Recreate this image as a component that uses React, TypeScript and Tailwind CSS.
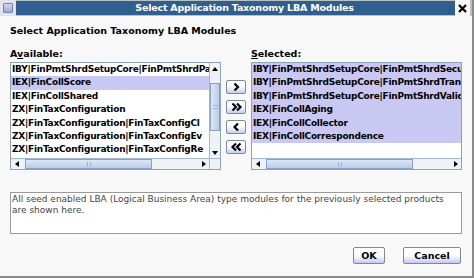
import React from 'react';

const available = [
  'IBY|FinPmtShrdSetupCore|FinPmtShrdPa',
  'IEX|FinCollScore',
  'IEX|FinCollShared',
  'ZX|FinTaxConfiguration',
  'ZX|FinTaxConfiguration|FinTaxConfigCl',
  'ZX|FinTaxConfiguration|FinTaxConfigEv',
  'ZX|FinTaxConfiguration|FinTaxConfigRe',
];

const selected = [
  'IBY|FinPmtShrdSetupCore|FinPmtShrdSecu',
  'IBY|FinPmtShrdSetupCore|FinPmtShrdTran',
  'IBY|FinPmtShrdSetupCore|FinPmtShrdValid',
  'IEX|FinCollAging',
  'IEX|FinCollCollector',
  'IEX|FinCollCorrespondence',
];

function Arrow({ dir }: { dir: 'up' | 'down' | 'left' | 'right' }) {
  const pts = {
    up: '1,6 4,2 7,6',
    down: '1,2 4,6 7,2',
    left: '6,1 2,4 6,7',
    right: '2,1 6,4 2,7',
  }[dir];
  return (
    <svg width="8" height="8" viewBox="0 0 8 8">
      <polygon points={pts} fill="#000" />
    </svg>
  );
}

function HScroll({ thumbLeft, thumbWidth }: { thumbLeft: number; thumbWidth: number }) {
  return (
    <div className="flex h-[11px] items-stretch border-t border-[#a3b8cc] bg-[#eef2f6]">
      <div className="flex w-[11px] items-center justify-center">
        <Arrow dir="left" />
      </div>
      <div className="relative flex-1">
        <div
          className="absolute top-0 bottom-0 flex items-center justify-center border border-[#8ca0bf] bg-gradient-to-b from-[#dde6f6] to-[#b9cde8]"
          style={{ left: thumbLeft, width: thumbWidth }}
        >
          <div className="h-[5px] w-[4px] border-x border-[#9fb2cf]" />
        </div>
      </div>
      <div className="flex w-[11px] items-center justify-center">
        <Arrow dir="right" />
      </div>
    </div>
  );
}

// chevron glyphs for the move buttons, count = 1 or 2
function Chevrons({ dir, count }: { dir: 'left' | 'right'; count: number }) {
  const one = dir === 'right' ? 'M1,1.5 L4.5,5 L1,8.5' : 'M4.5,1.5 L1,5 L4.5,8.5';
  return (
    <svg width={count === 1 ? 7 : 11} height="10" viewBox={count === 1 ? '0 0 6 10' : '0 0 10 10'}>
      <path d={one} fill="none" stroke="#000" strokeWidth="2.2" />
      {count === 2 && <path d={one} transform="translate(4.5,0)" fill="none" stroke="#000" strokeWidth="2.2" />}
    </svg>
  );
}

function MoveButton({ children }: { children: React.ReactNode }) {
  return (
    <button className="flex h-[14px] w-[20px] items-center justify-center rounded-[2px] border border-[#7a8a99] bg-gradient-to-b from-white from-40% to-[#c4d0f0]">
      {children}
    </button>
  );
}

const listText = 'whitespace-nowrap pl-[1px] text-[9px] font-bold tracking-[-0.25px] h-[13.4px] leading-[13.4px]';

export default function App() {
  return (
    <div
      className="flex h-[278px] w-[474px] flex-col overflow-hidden border-r-2 border-b-2 border-[#8a8a8a] bg-[#f8f8f8] text-black"
      style={{ fontFamily: '"DejaVu Sans", sans-serif' }}
    >
      <div className="flex h-[16px] items-center bg-[#b7c3c0] pr-[2px]">
        <div className="flex h-[16px] w-[16px] items-center justify-center bg-[#dfe3ec]">
          <div className="h-[10px] w-[10px] rounded-[1px] border border-[#8080a8] bg-gradient-to-b from-[#e8d0f0] to-[#8ea8d8]" />
        </div>
        <div className="flex h-[14px] flex-1 items-center justify-center bg-[#2f5e8f] pl-[18px] text-[9.5px] font-bold tracking-[-0.2px] text-white">
          Select Application Taxonomy LBA Modules
        </div>
        <div className="flex h-[16px] w-[15px] items-center justify-center bg-[#f8f8f8]">
          <svg width="9" height="9" viewBox="0 0 9 9">
            <path d="M1,1 L8,8 M8,1 L1,8" stroke="#000" strokeWidth="2.2" />
          </svg>
        </div>
      </div>

      <div className="flex flex-1 flex-col px-[10px] pt-[9px]">
        <div className="text-[9.5px] font-bold leading-[12px]">Select Application Taxonomy LBA Modules</div>

        <div className="mt-[11px] flex gap-[5px]">
          <div className="flex w-[211px] flex-col">
            <div className="mb-[2px] text-[9.5px] font-bold leading-[12px]">
              A<span className="underline">v</span>ailable:
            </div>
            <div className="flex h-[108px] flex-col border border-[#8da2b8] bg-white">
              <div className="flex flex-1">
                <div className="flex-1 overflow-hidden">
                  {available.map((t, i) => (
                    <div key={t} className={`${listText} ${i === 1 ? 'bg-[#c8c8f2]' : ''}`}>
                      {t}
                    </div>
                  ))}
                </div>
                <div className="flex w-[11px] flex-col border-l border-[#a3b8cc] bg-[#eef2f6]">
                  <div className="flex h-[11px] items-center justify-center">
                    <Arrow dir="up" />
                  </div>
                  <div className="flex flex-1 flex-col">
                    <div className="h-[9px]" />
                    <div className="flex h-[48px] items-center justify-center border border-[#8ca0bf] bg-gradient-to-r from-[#dde6f6] to-[#b9cde8]">
                      <div className="h-[4px] w-[5px] border-y border-[#9fb2cf]" />
                    </div>
                  </div>
                  <div className="flex h-[11px] items-center justify-center">
                    <Arrow dir="down" />
                  </div>
                </div>
              </div>
              <div className="flex">
                <div className="flex-1">
                  <HScroll thumbLeft={3} thumbWidth={127} />
                </div>
                <div className="w-[11px] border-t border-l border-[#a3b8cc] bg-[#eef2f6]" />
              </div>
            </div>
          </div>

          <div className="flex flex-col gap-[6px] pt-[32px]">
            <MoveButton>
              <Chevrons dir="right" count={1} />
            </MoveButton>
            <MoveButton>
              <Chevrons dir="right" count={2} />
            </MoveButton>
            <MoveButton>
              <Chevrons dir="left" count={1} />
            </MoveButton>
            <MoveButton>
              <Chevrons dir="left" count={2} />
            </MoveButton>
          </div>

          <div className="flex w-[211px] flex-col">
            <div className="mb-[2px] text-[9.5px] font-bold leading-[12px]">
              <span className="underline">S</span>elected:
            </div>
            <div className="flex h-[108px] flex-col border border-[#8da2b8] bg-white">
              <div className="flex-1 overflow-hidden">
                {selected.map((t) => (
                  <div key={t} className={`${listText} bg-[#c8c8f2]`}>
                    {t}
                  </div>
                ))}
              </div>
              <HScroll thumbLeft={3} thumbWidth={147} />
            </div>
          </div>
        </div>

        <div className="mt-[22px] h-[42px] border border-[#9a9a9a] bg-white px-[1px] py-[1px] text-[9px] leading-[11px] text-[#444]">
          All seed enabled LBA (Logical Business Area) type modules for the previously selected products are shown here.
        </div>

        <div className="mt-[13px] flex justify-end gap-[18px] pr-[1px]">
          <button className="h-[17px] w-[32px] rounded-[2px] border border-[#7a8a99] bg-gradient-to-b from-white from-50% to-[#c4c8f0] text-[9.5px] font-bold leading-none">
            OK
          </button>
          <button className="h-[17px] w-[58px] rounded-[2px] border border-[#7a8a99] bg-gradient-to-b from-white from-50% to-[#c4c8f0] text-[9.5px] font-bold leading-none">
            Cancel
          </button>
        </div>
      </div>
    </div>
  );
}
